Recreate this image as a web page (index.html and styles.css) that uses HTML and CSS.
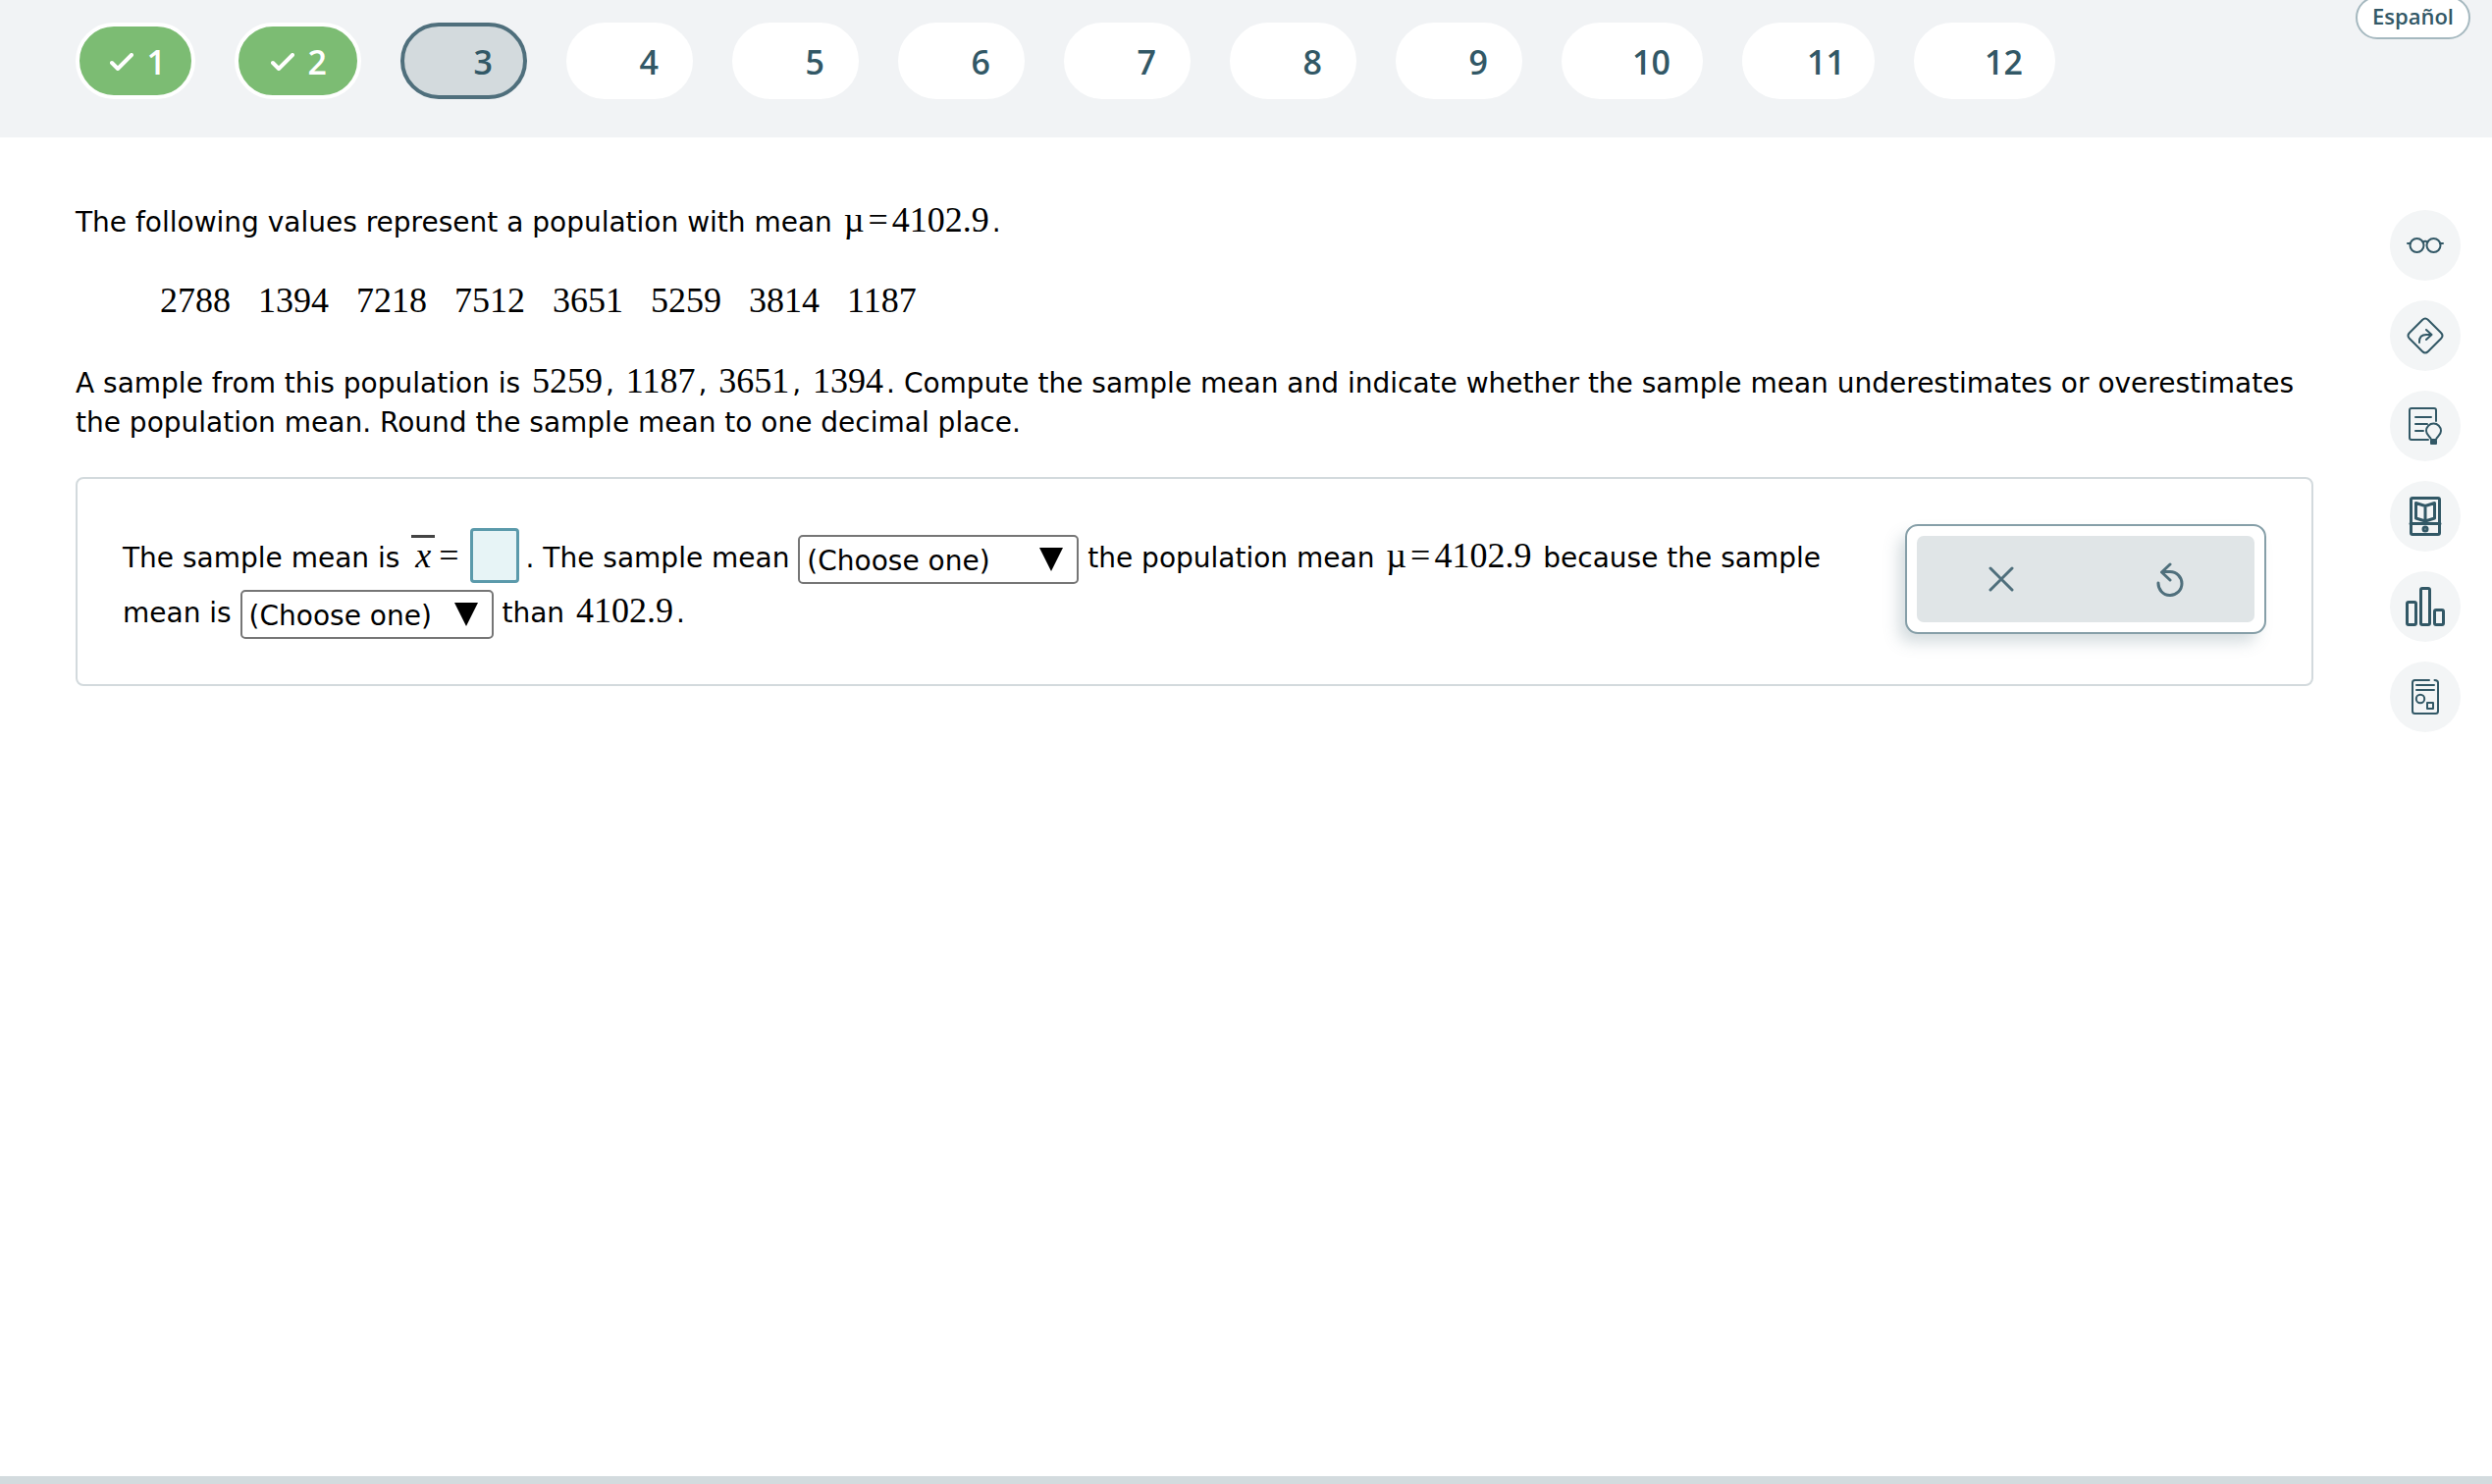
FILE: index.html
```html
<!DOCTYPE html>
<html lang="en">
<head>
  <meta charset="UTF-8" />
  <meta name="viewport" content="width=device-width, initial-scale=1.0" />
  <title>Sample Mean Practice</title>
  <link rel="stylesheet" href="styles.css">
</head>
<body>
  <header class="topbar">
    <nav class="steps" aria-label="Questions">
      <button class="step done short">
        <svg class="check" viewBox="0 0 24 18" aria-hidden="true"><path d="M2 10l6 6L22 2" /></svg>
        1
      </button>
      <button class="step done">
        <svg class="check" viewBox="0 0 24 18" aria-hidden="true"><path d="M2 10l6 6L22 2" /></svg>
        2
      </button>
      <button class="step current" aria-current="step">3</button>
      <button class="step">4</button>
      <button class="step">5</button>
      <button class="step">6</button>
      <button class="step">7</button>
      <button class="step">8</button>
      <button class="step">9</button>
      <button class="step wide">10</button>
      <button class="step medium">11</button>
      <button class="step wide">12</button>
    </nav>
    <button class="language">Español</button>
  </header>

  <div class="page">
    <main class="question">
      <p>The following values represent a population with mean <span class="math">µ<span class="eq">=</span>4102.9</span>.</p>
      <ul class="values math">
        <li>2788</li>
        <li>1394</li>
        <li>7218</li>
        <li>7512</li>
        <li>3651</li>
        <li>5259</li>
        <li>3814</li>
        <li>1187</li>
      </ul>
      <p>A sample from this population is <span class="math">5259</span>, <span class="math">1187</span>, <span class="math">3651</span>, <span class="math">1394</span>. Compute the sample mean and indicate whether the sample mean underestimates or overestimates the population mean. Round the sample mean to one decimal place.</p>

      <form class="answer">
        <div class="answer-text">
          The sample mean is <label for="mean" class="math"><i class="xbar">x</i><span class="eq">=</span></label><input id="mean" class="blank" type="text">. The sample mean
          <span class="dropdown large">
            <select aria-label="Estimate direction">
              <option>(Choose one)</option>
              <option>underestimates</option>
              <option>overestimates</option>
            </select>
            <svg class="arrow" viewBox="0 0 24 24" aria-hidden="true"><path d="M0 0h24L12 24z" /></svg>
          </span>
          the population mean <span class="math">µ<span class="eq">=</span>4102.9</span> because the sample mean is
          <span class="dropdown">
            <select aria-label="Comparison">
              <option>(Choose one)</option>
              <option>less</option>
              <option>greater</option>
            </select>
            <svg class="arrow" viewBox="0 0 24 24" aria-hidden="true"><path d="M0 0h24L12 24z" /></svg>
          </span>
          than <span class="math">4102.9</span>.
        </div>
        <div class="palette">
          <div class="palette-inner">
            <button type="button" aria-label="Clear">
              <svg viewBox="0 0 36 36"><path d="M7 7l22 22M29 7L7 29" /></svg>
            </button>
            <button type="reset" aria-label="Undo">
              <svg viewBox="0 0 36 36"><path d="M6 22A12 12 0 1 0 18 10.500H10M18 3l-8.500 8 8.500 8" /></svg>
            </button>
          </div>
        </div>
      </form>
    </main>

    <aside class="tools">
      <button class="tool" aria-label="Reading view">
        <svg viewBox="0 0 40 40"><circle cx="11.500" cy="20" r="7" /><circle cx="28.500" cy="20" r="7" /><path d="M2 18h3M35 18h3M17.500 16.500q2.500-1.500 5 0" /></svg>
      </button>
      <button class="tool" aria-label="Next step">
        <svg viewBox="0 0 40 40"><path d="M17 4q3-3 6 0l13 13q3 3 0 6L23 36q-3 3-6 0L4 23q-3-3 0-6zM14 27v-1q0-7 7-7h5M21 14l5.500 5-5.500 5" /></svg>
      </button>
      <button class="tool" aria-label="Hints">
        <svg viewBox="0 0 40 40"><path d="M23 34H6q-2 0-2-2V4q0-2 2-2h23q2 0 2 2v11M10 11h16M10 18h12M10 25h8M26 34c0-3-5-4-5-9a7.500 7.500 0 0 1 15 0c0 5-5 6-5 9z" /><path class="solid" d="M26 35h5v3h-5z" /></svg>
      </button>
      <button class="tool" aria-label="Textbook">
        <svg class="heavy" viewBox="0 0 40 40"><rect x="5.500" y="1.500" width="29" height="37" rx="1.500" /><path d="M5 27.500h30M20 9.500L10.500 6.500v15.500L20 25l9.500-3V6.500zV25" /><circle cx="20" cy="33" r="2" /></svg>
      </button>
      <button class="tool" aria-label="Statistics">
        <svg class="heavy" viewBox="0 0 40 40"><rect x="1.500" y="15.500" width="9" height="23" rx="1.500" /><rect x="15.500" y="1.500" width="9" height="37" rx="1.500" /><rect x="29.500" y="23.500" width="9" height="15" rx="1.500" /></svg>
      </button>
      <button class="tool" aria-label="Formula sheet">
        <svg viewBox="0 0 40 40"><path d="M24 3H9.500Q7 3 7 5.500v29Q7 37 9.500 37h21q2.500 0 2.500-2.500v-29Q33 3 29.500 3M11 8h18M11 13h18" /><circle cx="15" cy="22" r="4.200" /><path d="M22 26h6v6h-6z" /></svg>
      </button>
    </aside>
  </div>

  <footer class="bottombar"></footer>
</body>
</html>
```

FILE: styles.css
```css
* {
  box-sizing: border-box;
}

body {
  margin: 0;
  min-height: 100vh;
  display: flex;
  flex-direction: column;
  background-color: #ffffff;
  color: #000000;
  font-family: Verdana, "DejaVu Sans", sans-serif;
  font-size: 28px;
  line-height: 40px;
}

button {
  padding: 0;
  border: none;
  cursor: pointer;
}

svg {
  fill: none;
  stroke: currentColor;
  stroke-linecap: round;
  stroke-linejoin: round;
}

/* Top bar */
.topbar {
  display: flex;
  justify-content: space-between;
  align-items: flex-start;
  height: 140px;
  padding: 0 22px 0 77px;
  background-color: #f1f3f5;
}

.steps {
  display: flex;
  gap: 40px;
  padding-top: 23px;
}

.step {
  display: flex;
  align-items: center;
  justify-content: flex-end;
  gap: 14px;
  width: 129px;
  height: 78px;
  padding: 1px 31px 0 0;
  border: 4px solid #ffffff;
  border-radius: 39px;
  background-color: #ffffff;
  color: #325866;
  font-family: "Open Sans", sans-serif;
  font-size: 34px;
  font-weight: 600;
}

.step.short {
  width: 122px;
  padding-right: 26px;
}

.step.medium {
  width: 135px;
  padding-right: 26px;
}

.step.wide {
  width: 144px;
  padding-right: 29px;
}

.step.done {
  background-color: #7cbc73;
  color: #ffffff;
}

.step.current {
  border-color: #4f6f7c;
  background-color: #d3dadd;
}

.check {
  width: 24px;
  height: 18px;
  stroke-width: 4;
}

.language {
  width: 117px;
  height: 44px;
  margin-top: -4px;
  padding-bottom: 4px;
  border: 2px solid #a5b8bf;
  border-radius: 22px;
  background-color: #ffffff;
  color: #325866;
  font-family: "Open Sans", sans-serif;
  font-size: 22px;
  font-weight: 600;
}

/* Question */
.page {
  flex: 1;
  display: flex;
  align-items: flex-start;
  gap: 78px;
  padding: 66px 32px 40px 77px;
}

.question {
  flex: 1;
}

.question p {
  margin: 0;
}

.math {
  margin: 0 3px;
  font-family: "Liberation Serif", serif;
  font-size: 36px;
  line-height: 36px;
}

.eq {
  margin: 0 4px;
}

.values {
  display: flex;
  gap: 28px;
  margin: 39px 0 44px;
  padding: 0 0 0 86px;
  list-style: none;
  line-height: 40px;
}

.answer {
  display: flex;
  gap: 40px;
  margin-top: 35px;
  padding: 46px 46px 44px;
  border: 2px solid #d3dadd;
  border-radius: 8px;
}

.answer-text {
  flex: 1;
  padding-top: 4px;
  line-height: 56px;
}

.xbar {
  display: inline-block;
  padding: 0 4px;
  border-top: 3px solid #444444;
}

.blank {
  width: 50px;
  height: 56px;
  margin: 0 7px 0 4px;
  padding: 4px;
  border: 3px solid #5b9aab;
  border-radius: 4px;
  background-color: #e7f4f6;
  font-family: "Liberation Serif", serif;
  font-size: 36px;
}

.dropdown {
  position: relative;
  display: inline-block;
  width: 258px;
  height: 50px;
  line-height: 0;
  vertical-align: middle;
}

.dropdown.large {
  width: 286px;
}

.dropdown select {
  appearance: none;
  width: 100%;
  height: 50px;
  padding: 2px 7px 0;
  border: 2px solid #767676;
  border-radius: 5px;
  background-color: #ffffff;
  color: #000000;
  font-family: inherit;
  font-size: 28px;
}

.arrow {
  position: absolute;
  top: 13px;
  right: 16px;
  width: 24px;
  height: 24px;
  fill: #000000;
  stroke: none;
  pointer-events: none;
}

.palette {
  align-self: flex-start;
  width: 368px;
  padding: 10px;
  border: 2px solid #869fa8;
  border-radius: 13px;
  background-color: #ffffff;
  box-shadow: -8px 10px 16px -2px rgba(79, 111, 124, 0.25);
}

.palette-inner {
  display: flex;
  height: 88px;
  border-radius: 7px;
  background-color: #e0e5e7;
}

.palette button {
  flex: 1;
  display: flex;
  justify-content: center;
  align-items: center;
  background: none;
  color: #4f6f7c;
}

.palette svg {
  width: 36px;
  height: 36px;
  stroke-width: 3;
}

/* Right side tools */
.tools {
  display: flex;
  flex-direction: column;
  gap: 20px;
  padding-top: 8px;
}

.tool {
  display: flex;
  justify-content: center;
  align-items: center;
  width: 72px;
  height: 72px;
  border-radius: 50%;
  background-color: #f3f5f6;
  color: #325866;
}

.tool svg {
  width: 40px;
  height: 40px;
  stroke-width: 2;
}

.tool .heavy {
  stroke-width: 3;
}

.tool .solid {
  fill: currentColor;
}

.bottombar {
  height: 8px;
  background-color: #d3dbde;
}
```
